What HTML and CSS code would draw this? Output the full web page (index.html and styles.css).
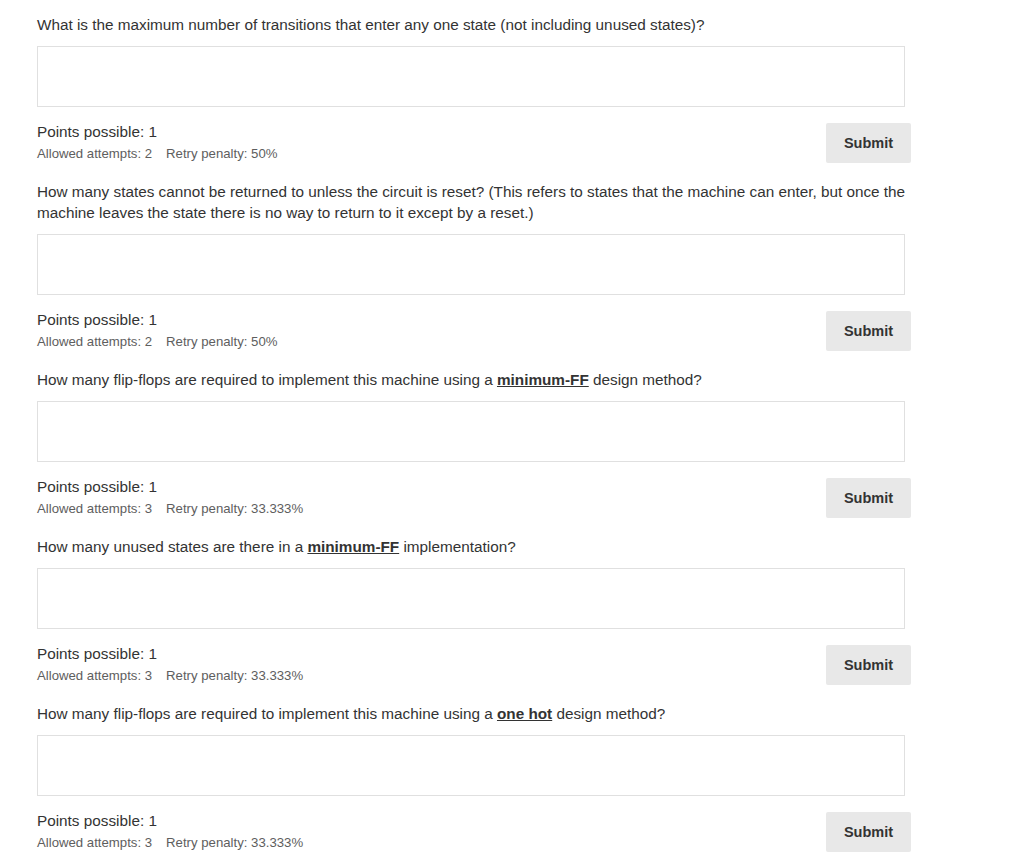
FILE: index.html
```html
<!DOCTYPE html>
<html>
<head>
<meta charset="utf-8">
<link rel="stylesheet" href="styles.css">
</head>
<body>
<div class="page">
  <div class="question">
    <p class="prompt">What is the maximum number of transitions that enter any one state (not including unused states)?</p>
    <div class="answer"></div>
    <div class="meta">
      <div class="info">
        <div class="points">Points possible: 1</div>
        <div class="attempts"><span>Allowed attempts: 2</span><span>Retry penalty: 50%</span></div>
      </div>
      <button class="submit">Submit</button>
    </div>
  </div>
  <div class="question">
    <p class="prompt">How many states cannot be returned to unless the circuit is reset? (This refers to states that the machine can enter, but once the machine leaves the state there is no way to return to it except by a reset.)</p>
    <div class="answer"></div>
    <div class="meta">
      <div class="info">
        <div class="points">Points possible: 1</div>
        <div class="attempts"><span>Allowed attempts: 2</span><span>Retry penalty: 50%</span></div>
      </div>
      <button class="submit">Submit</button>
    </div>
  </div>
  <div class="question">
    <p class="prompt">How many flip-flops are required to implement this machine using a <b class="em">minimum-FF</b> design method?</p>
    <div class="answer"></div>
    <div class="meta">
      <div class="info">
        <div class="points">Points possible: 1</div>
        <div class="attempts"><span>Allowed attempts: 3</span><span>Retry penalty: 33.333%</span></div>
      </div>
      <button class="submit">Submit</button>
    </div>
  </div>
  <div class="question">
    <p class="prompt">How many unused states are there in a <b class="em">minimum-FF</b> implementation?</p>
    <div class="answer"></div>
    <div class="meta">
      <div class="info">
        <div class="points">Points possible: 1</div>
        <div class="attempts"><span>Allowed attempts: 3</span><span>Retry penalty: 33.333%</span></div>
      </div>
      <button class="submit">Submit</button>
    </div>
  </div>
  <div class="question">
    <p class="prompt">How many flip-flops are required to implement this machine using a <b class="em">one hot</b> design method?</p>
    <div class="answer"></div>
    <div class="meta">
      <div class="info">
        <div class="points">Points possible: 1</div>
        <div class="attempts"><span>Allowed attempts: 3</span><span>Retry penalty: 33.333%</span></div>
      </div>
      <button class="submit">Submit</button>
    </div>
  </div>
</div>
</body>
</html>
```
FILE: styles.css
```css
html, body {
  margin: 0;
  padding: 0;
  background: #ffffff;
}
body {
  font-family: "Liberation Sans", Arial, sans-serif;
  color: #333333;
}
.page {
  padding: 14px 0 0 37px;
  width: 874px;
}
.question {
  margin-bottom: 15px;
}
.prompt {
  margin: 0;
  font-size: 15.3px;
  line-height: 21px;
  color: #333333;
}
.em {
  font-weight: bold;
  text-decoration: underline;
}
.answer {
  margin-top: 11px;
  width: 868px;
  height: 61px;
  box-sizing: border-box;
  border: 1px solid #e0e0e0;
  background: #ffffff;
}
.meta {
  margin-top: 15px;
  display: flex;
  justify-content: space-between;
  align-items: flex-start;
}
.points {
  font-size: 15.3px;
  line-height: 20px;
  color: #333333;
}
.attempts {
  font-size: 13.2px;
  line-height: 24px;
  color: #5e5e5e;
}
.attempts span + span {
  margin-left: 14px;
}
.submit {
  margin-top: 1px;
  width: 85px;
  height: 40px;
  border: none;
  border-radius: 2px;
  background: #e8e8e8;
  color: #333333;
  font-family: "Liberation Sans", Arial, sans-serif;
  font-size: 14.5px;
  font-weight: 600;
  padding: 0;
  cursor: pointer;
}
```
